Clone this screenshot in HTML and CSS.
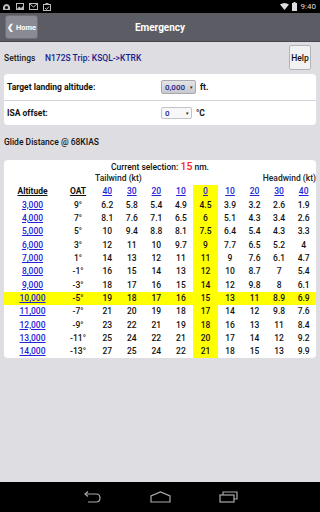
FILE: index.html
```html
<!DOCTYPE html>
<html lang="en">
<head>
  <meta charset="UTF-8" />
  <meta name="viewport" content="width=device-width, initial-scale=1.0"/>
  <title>Emergency</title>
  <link rel="stylesheet" href="styles.css">
</head>
<body>

  <!-- status bar -->
  <div class="status-bar">
    <div class="status-left">
      <svg width="9" height="8" viewBox="0 0 9 8"><path d="M1 7 L8 7 L8 4 Q7 1 4.5 1 Q2 1 1 4 Z" fill="#bbb"/><circle cx="4.5" cy="4.5" r="1.5" fill="#000"/></svg>
      <svg width="8" height="7" viewBox="0 0 8 7"><rect x="0.5" y="0.5" width="7" height="6" fill="none" stroke="#bbb"/><path d="M1 6 L3 3.5 L5 5 L7 3 L7 6 Z" fill="#bbb"/></svg>
      <svg width="9" height="7" viewBox="0 0 9 7"><rect x="0.5" y="0.5" width="8" height="6" fill="none" stroke="#bbb"/><path d="M1 1 L4.5 4 L8 1" fill="none" stroke="#bbb"/></svg>
      <svg width="8" height="8" viewBox="0 0 8 8"><rect x="0.5" y="1.5" width="7" height="6" fill="none" stroke="#bbb"/><rect x="2.5" y="0" width="3" height="2" fill="#bbb"/><path d="M2 5 L3.5 6.5 L6 3.5" fill="none" stroke="#bbb"/></svg>
    </div>
    <div class="status-right">
      <svg width="9" height="7" viewBox="0 0 9 7"><path d="M0 1.5 Q4.5 -1.5 9 1.5 L4.5 7 Z" fill="#ddd"/></svg>
      <svg width="5" height="9" viewBox="0 0 5 9"><rect x="1.5" y="0" width="2" height="1" fill="#ddd"/><rect x="0" y="1" width="5" height="8" fill="#ddd"/></svg>
      <span class="clock">9:40</span>
    </div>
  </div>

  <!-- title bar -->
  <div class="title-bar">
    <div class="home-btn">&#10094; Home</div>
    <div class="title">Emergency</div>
  </div>

  <div class="settings-row">
    <span class="settings-label">Settings</span>
    <span class="trip">N172S Trip: KSQL-&gt;KTRK</span>
    <div class="help-btn">Help</div>
  </div>

  <div class="card inputs">
    <div class="input-row">
      <span class="input-label">Target landing altitude:</span>
      <span class="input-value"><span class="select grey">0,000 <i>&#9662;</i></span> ft.</span>
    </div>
    <div class="input-row">
      <span class="input-label">ISA offset:</span>
      <span class="input-value"><span class="select white">0 <i>&#9662;</i></span> °C</span>
    </div>
  </div>

  <div class="section-label">Glide Distance @ 68KIAS</div>

  <div class="card glide">
    <div class="current">Current selection: <span class="cur-num">15</span> nm.</div>
    <table class="glide-table">
      <colgroup>
        <col class="c-alt"><col class="c-oat">
        <col><col><col><col><col><col><col><col><col>
      </colgroup>
      <tr class="wind-row">
        <td></td><td></td>
        <td colspan="4" class="tail">Tailwind (kt)</td>
        <td></td>
        <td colspan="4" class="head">Headwind (kt)</td>
      </tr>
      <tr class="hdr">
        <th class="u">Altitude</th><th class="u">OAT</th>
        <th class="lnk">40</th><th class="lnk">30</th><th class="lnk">20</th><th class="lnk">10</th>
        <th class="lnk zero">0</th>
        <th class="lnk">10</th><th class="lnk">20</th><th class="lnk">30</th><th class="lnk">40</th>
      </tr>
      <tr><td class="lnk">3,000</td><td>9°</td><td>6.2</td><td>5.8</td><td>5.4</td><td>4.9</td><td class="zero">4.5</td><td>3.9</td><td>3.2</td><td>2.6</td><td>1.9</td></tr>
      <tr><td class="lnk">4,000</td><td>7°</td><td>8.1</td><td>7.6</td><td>7.1</td><td>6.5</td><td class="zero">6</td><td>5.1</td><td>4.3</td><td>3.4</td><td>2.6</td></tr>
      <tr><td class="lnk">5,000</td><td>5°</td><td>10</td><td>9.4</td><td>8.8</td><td>8.1</td><td class="zero">7.5</td><td>6.4</td><td>5.4</td><td>4.3</td><td>3.3</td></tr>
      <tr><td class="lnk">6,000</td><td>3°</td><td>12</td><td>11</td><td>10</td><td>9.7</td><td class="zero">9</td><td>7.7</td><td>6.5</td><td>5.2</td><td>4</td></tr>
      <tr><td class="lnk">7,000</td><td>1°</td><td>14</td><td>13</td><td>12</td><td>11</td><td class="zero">11</td><td>9</td><td>7.6</td><td>6.1</td><td>4.7</td></tr>
      <tr><td class="lnk">8,000</td><td>-1°</td><td>16</td><td>15</td><td>14</td><td>13</td><td class="zero">12</td><td>10</td><td>8.7</td><td>7</td><td>5.4</td></tr>
      <tr><td class="lnk">9,000</td><td>-3°</td><td>18</td><td>17</td><td>16</td><td>15</td><td class="zero">14</td><td>12</td><td>9.8</td><td>8</td><td>6.1</td></tr>
      <tr class="selected"><td class="lnk">10,000</td><td>-5°</td><td>19</td><td>18</td><td>17</td><td>16</td><td class="zero">15</td><td>13</td><td>11</td><td>8.9</td><td>6.9</td></tr>
      <tr><td class="lnk">11,000</td><td>-7°</td><td>21</td><td>20</td><td>19</td><td>18</td><td class="zero">17</td><td>14</td><td>12</td><td>9.8</td><td>7.6</td></tr>
      <tr><td class="lnk">12,000</td><td>-9°</td><td>23</td><td>22</td><td>21</td><td>19</td><td class="zero">18</td><td>16</td><td>13</td><td>11</td><td>8.4</td></tr>
      <tr><td class="lnk">13,000</td><td>-11°</td><td>25</td><td>24</td><td>22</td><td>21</td><td class="zero">20</td><td>17</td><td>14</td><td>12</td><td>9.2</td></tr>
      <tr><td class="lnk">14,000</td><td>-13°</td><td>27</td><td>25</td><td>24</td><td>22</td><td class="zero">21</td><td>18</td><td>15</td><td>13</td><td>9.9</td></tr>
    </table>
  </div>

  <!-- android nav bar -->
  <div class="nav-bar">
    <svg width="20" height="12" viewBox="0 0 20 12"><path d="M4 3 L14 3 Q18 3 18 7 Q18 11 14 11 L6 11" fill="none" stroke="#aaa" stroke-width="1.2"/><path d="M6 0.5 L3 3 L6 5.5" fill="none" stroke="#aaa" stroke-width="1.2"/></svg>
    <svg width="21" height="12" viewBox="0 0 21 12"><path d="M1 11 L1 5 L10.5 1 L20 5 L20 11 Z" fill="none" stroke="#aaa" stroke-width="1.2"/></svg>
    <svg width="20" height="12" viewBox="0 0 20 12"><rect x="1" y="4" width="14" height="7" fill="none" stroke="#aaa" stroke-width="1.2"/><path d="M4 4 L4 1 L18 1 L18 8 L15 8" fill="none" stroke="#aaa" stroke-width="1.2"/></svg>
  </div>

</body>
</html>
```

FILE: styles.css
```css
body {
  font-family: Roboto, 'Noto Sans', sans-serif;
  background: #dedee2;
  color: #111;
  margin: 0;
  padding: 0;
  width: 320px;
  height: 512px;
  display: flex;
  flex-direction: column;
  font-size: 8.5px;
  font-weight: 500;
  overflow: hidden;
}

.status-bar {
  height: 13px;
  background: #000;
  display: flex;
  justify-content: space-between;
  align-items: center;
  padding: 0 4px 0 2px;
}

.status-left,
.status-right {
  display: flex;
  align-items: center;
  gap: 3px;
}

.status-left svg + svg {
  margin-left: 2px;
}

.clock {
  color: #ddd;
  font-size: 8px;
  font-weight: normal;
  margin-left: 1px;
}

.title-bar {
  height: 28px;
  background: #5b5c64;
  border-bottom: 1px solid #45464c;
  display: flex;
  align-items: center;
  position: relative;
}

.home-btn {
  margin-left: 5px;
  width: 33px;
  height: 24px;
  box-sizing: border-box;
  background: #8a8b92;
  border: 1px solid #6e6f76;
  border-radius: 3px;
  color: #fff;
  font-weight: bold;
  font-size: 7.5px;
  display: flex;
  align-items: center;
  justify-content: center;
  gap: 1px;
}

.title {
  position: absolute;
  left: 0;
  right: 0;
  text-align: center;
  color: #fff;
  font-weight: bold;
  font-size: 10px;
  pointer-events: none;
}

.settings-row {
  height: 31px;
  display: flex;
  align-items: center;
  padding: 0 9px 0 4px;
}

.settings-label {
  color: #222;
  width: 41px;
}

.trip {
  color: #1c1c8c;
  flex: 1;
}

.help-btn {
  width: 22px;
  height: 25px;
  box-sizing: border-box;
  background: #f2f2f2;
  border: 1px solid #b4b4b8;
  border-radius: 2px;
  display: flex;
  align-items: center;
  justify-content: center;
  color: #111;
}

.card {
  background: #fff;
  margin: 0 4px;
  border-radius: 4px;
}

.inputs {
  margin-top: 1px;
}

.input-row {
  display: grid;
  grid-template-columns: 157px auto;
  align-items: center;
  height: 26px;
  padding-left: 3px;
  box-sizing: border-box;
}

.input-row + .input-row {
  border-top: 1px solid #d4d4d8;
  height: 25px;
}

.input-label {
  font-weight: bold;
  color: #111;
}

.input-value {
  margin-left: -3px;
  font-weight: bold;
  display: flex;
  align-items: center;
  gap: 4px;
}

.select {
  display: inline-flex;
  align-items: center;
  justify-content: space-between;
  box-sizing: border-box;
  height: 14px;
  padding: 0 2px 0 3px;
  border: 1px solid #a8a8ae;
  border-radius: 2px;
  color: #22228e;
  font-size: 8px;
  font-weight: 500;
}

.select i {
  font-style: normal;
  color: #222;
  font-size: 5px;
}

.select.grey {
  width: 35px;
  background: linear-gradient(#e4e4e6, #c9c9cd);
}

.select.white {
  width: 31px;
  height: 12px;
  background: #f7f7f9;
  border-color: #c4c4c8;
}

.section-label {
  padding: 12px 4px 0;
  height: 24px;
  box-sizing: border-box;
  color: #111;
}

.glide {
  margin-top: 11px;
  height: 198px;
}

.current {
  height: 12px;
  line-height: 13px;
  text-align: center;
  color: #111;
}

.cur-num {
  color: #ff1a1a;
  font-size: 10.5px;
}

.glide-table {
  width: 312px;
  table-layout: fixed;
  border-collapse: collapse;
}

.c-alt {
  width: 57px;
}

.c-oat {
  width: 34px;
}

.glide-table td,
.glide-table th {
  height: 13.35px;
  padding: 0;
  text-align: center;
  font-size: 8.5px;
  line-height: 13px;
  color: #111;
  font-weight: 500;
}

.glide-table .wind-row td {
  height: 13px;
  color: #222;
}

.glide-table .tail {
  text-align: left;
}

.glide-table .head {
  text-align: right;
}

.glide-table th.u {
  font-weight: bold;
  text-decoration: underline;
}

.glide-table .lnk {
  color: #2323d6;
  text-decoration: underline;
}

.glide-table .zero {
  background: #ffff00;
}

.glide-table .selected td {
  background: #ffff00;
}

.nav-bar {
  margin-top: auto;
  height: 30px;
  background: #000;
  display: flex;
  align-items: center;
  justify-content: center;
  gap: 48px;
}
```
